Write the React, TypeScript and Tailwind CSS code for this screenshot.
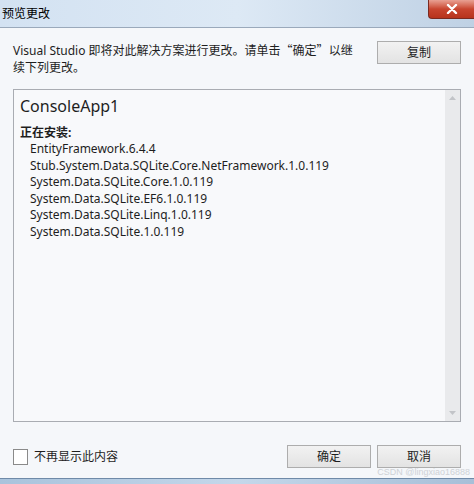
import React from 'react';

const packages = [
  'EntityFramework.6.4.4',
  'Stub.System.Data.SQLite.Core.NetFramework.1.0.119',
  'System.Data.SQLite.Core.1.0.119',
  'System.Data.SQLite.EF6.1.0.119',
  'System.Data.SQLite.Linq.1.0.119',
  'System.Data.SQLite.1.0.119',
];

const font = "font-['Noto_Sans','Noto_Sans_CJK_SC',sans-serif]";

const WinButton: React.FC<{ label: string }> = ({ label }) => (
  <button className="w-[84px] h-[23px] border border-[#adadad] bg-gradient-to-b from-[#f2f2f2] to-[#e3e3e3] text-[12px] text-[#1e1e1e] flex items-center justify-center">
    {label}
  </button>
);

const App: React.FC = () => {
  return (
    <div className={`w-[474px] h-[484px] flex flex-col bg-[#f5f7fa] overflow-hidden ${font}`}>
      {/* Title bar */}
      <div className="h-[28px] flex justify-between items-start bg-gradient-to-r from-[#d3e2f2] via-[#dde9f5] to-[#bfd1e4] border-b border-[#9aa9bb]">
        <span className="pl-[2px] pt-[6px] text-[12px] leading-[16px] text-black">预览更改</span>
        <div className="w-[46px] h-[19px] rounded-bl-[4px] bg-gradient-to-b from-[#e8a093] via-[#c8452f] to-[#b7331c] border border-[#7a2a20] border-t-0 border-r-0 flex items-center justify-center">
          <svg width="12" height="10" viewBox="0 0 12 10">
            <path d="M2 1 L10 9 M10 1 L2 9" stroke="#ffffff" strokeWidth="2.4" strokeLinecap="round" />
          </svg>
        </div>
      </div>

      {/* Body */}
      <div className="flex-1 flex flex-col px-[13px]">
        <div className="flex justify-between items-start pt-[13px]">
          <p className="text-[12px] leading-[17px] text-[#1e1e1e] w-[350px]">
            Visual Studio 即将对此解决方案进行更改。请单击
            <span className="font-['Noto_Sans_CJK_SC',sans-serif]">“确定”</span>
            以继
            <br />
            续下列更改。
          </p>
          <WinButton label="复制" />
        </div>

        {/* List box */}
        <div className="mt-[13px] h-[333px] border border-[#a9acb2] bg-[#f8f9fb] flex">
          <div className="flex-1 pl-[6px] pt-[4px]">
            <div className="text-[16px] leading-[24px] text-[#1e1e1e]">ConsoleApp1</div>
            <div className="mt-[7px] text-[12px] leading-[16px] font-bold text-[#1e1e1e]">正在安装:</div>
            <div className="pl-[10px] flex flex-col">
              {packages.map((p) => (
                <div key={p} className="text-[12px] leading-[16.6px] text-[#1e1e1e]">
                  {p}
                </div>
              ))}
            </div>
          </div>
          <div className="w-[15px] bg-[#e9eaec] flex flex-col justify-between items-center py-[6px]">
            <svg width="7" height="4" viewBox="0 0 7 4">
              <path d="M0 4 L3.5 0 L7 4 Z" fill="#c2c4c8" />
            </svg>
            <svg width="7" height="4" viewBox="0 0 7 4">
              <path d="M0 0 L3.5 4 L7 0 Z" fill="#c2c4c8" />
            </svg>
          </div>
        </div>

        {/* Footer */}
        <div className="mt-[23px] flex items-center justify-between">
          <label className="flex items-center gap-[6px]">
            <span className="w-[15px] h-[16px] border border-[#8a8a8a] bg-white" />
            <span className="text-[12px] text-[#1e1e1e]">不再显示此内容</span>
          </label>
          <div className="flex gap-[6px]">
            <WinButton label="确定" />
            <WinButton label="取消" />
          </div>
        </div>
        <div className="flex justify-end -mr-[9px] mt-[-1px]">
          <span className="text-[9px] leading-[11px] text-[#cfd2d6] font-['Liberation_Sans',sans-serif]">CSDN @lingxiao16888</span>
        </div>
      </div>

      {/* Bottom frame edge */}
      <div className="h-[6px] border-t border-[#6f8aa8] bg-gradient-to-r from-[#a9c3dc] via-[#c4d7ea] to-[#a7bfd8]" />
    </div>
  );
};

export default App;
